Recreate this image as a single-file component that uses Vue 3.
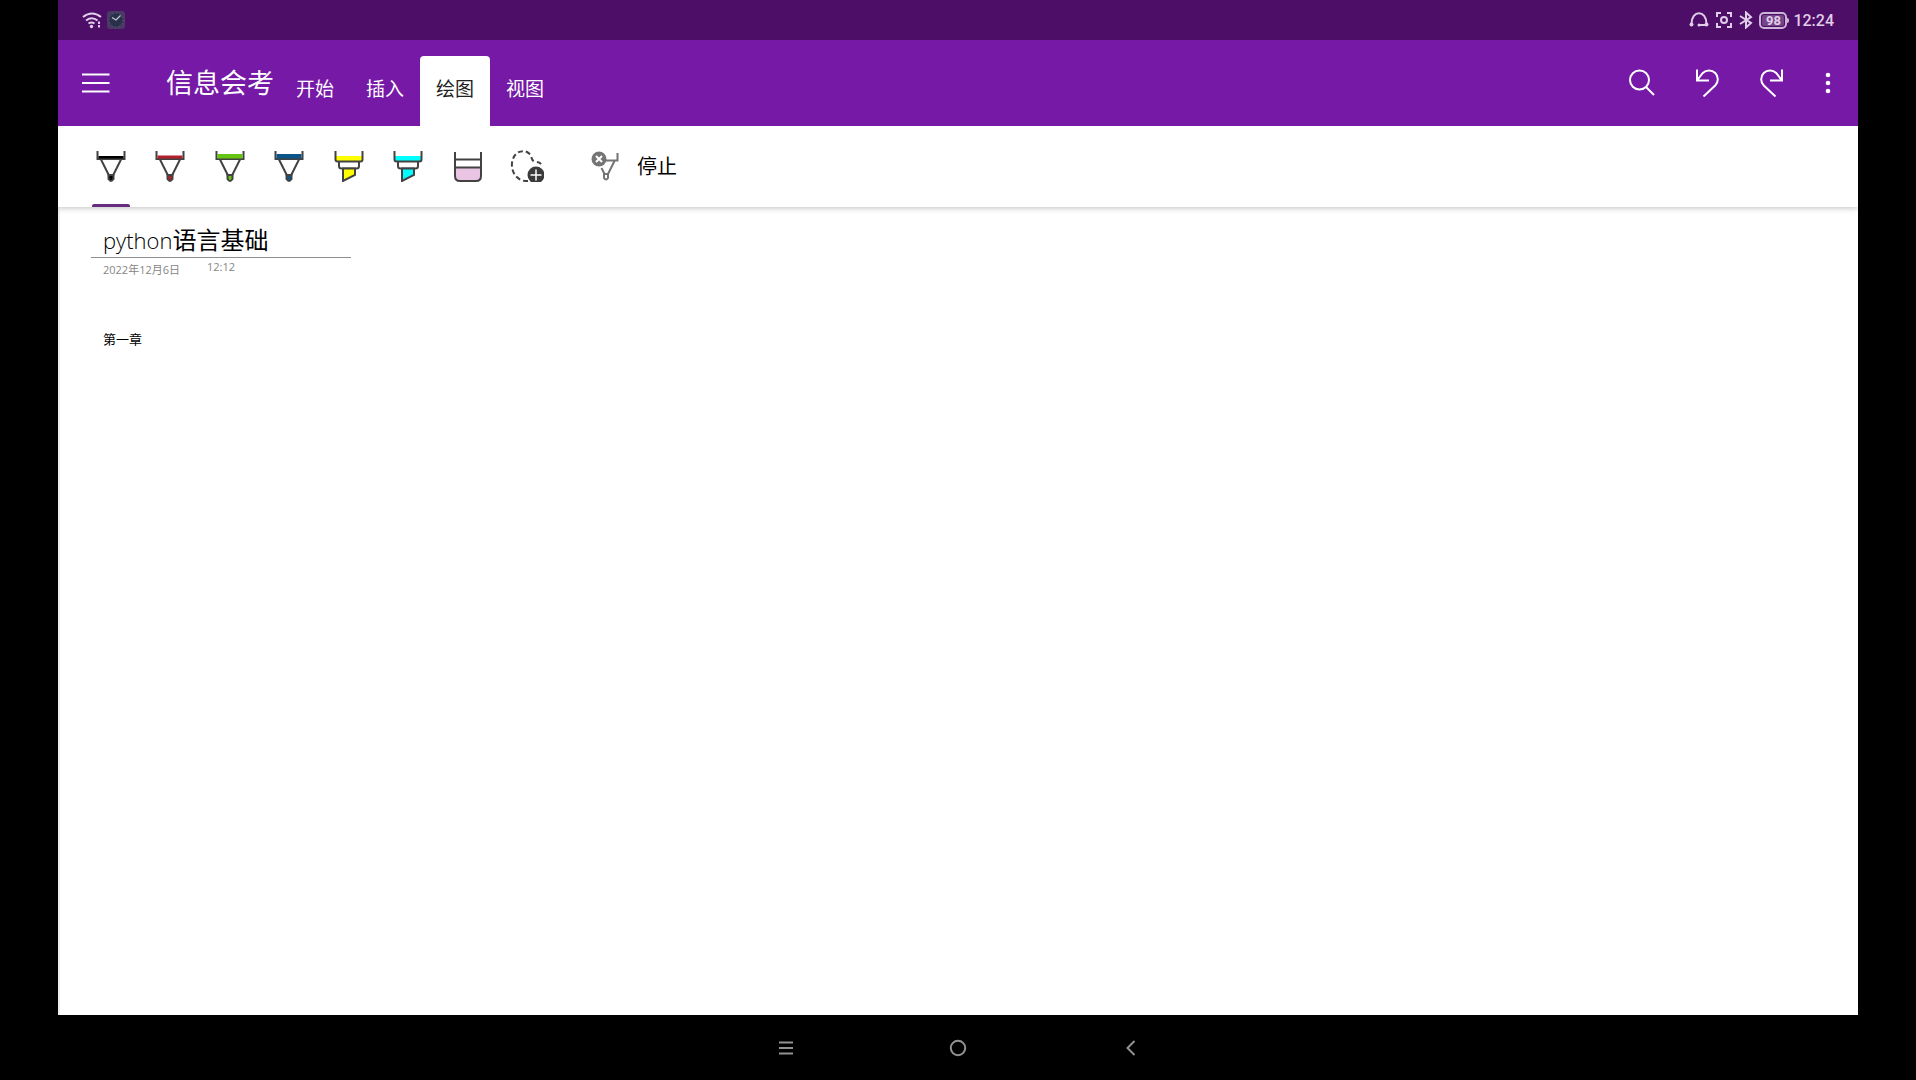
<template>
  <div class="screen">
    <div class="app">
      <div class="status-bar">
        <div class="status-group">
          <svg class="wifi" width="20" height="18" viewBox="0 0 20 18">
            <path d="M1 6Q10-1 19 6M4 9.500Q10 5 15.500 9.500M6.500 12.500Q9.500 10.500 12.500 12.500" />
            <circle cx="9.500" cy="15.500" r="1.700" />
            <path d="M17 10.500v6" stroke-width="3" stroke-dasharray="2.500 1" />
          </svg>
          <svg width="18" height="18" viewBox="0 0 18 18">
            <rect width="18" height="18" rx="3" fill="#4a3a63" />
            <circle cx="9" cy="9" r="7" fill="#29304a" stroke="#6b7189" stroke-dasharray="1 2.660" />
            <path d="M5 6.500l4 2.500 4.500-4.500" fill="none" stroke="#c3cbd3" stroke-width="1.200" />
          </svg>
        </div>
        <div class="status-group status-right">
          <svg width="20" height="18" viewBox="0 0 20 18">
            <path d="M2.500 13C2.500-1.500 17.500-1.500 17.500 13M10 14h7" />
            <circle cx="2.500" cy="13.500" r="2" />
            <circle cx="17.500" cy="13.500" r="2" />
            <circle cx="10" cy="14" r="1.500" />
          </svg>
          <svg width="18" height="18" viewBox="0 0 18 18">
            <path d="M2 6V2h4M12 2h4v4M16 12v4h-4M6 16H2v-4" />
            <circle class="ring" cx="9" cy="9" r="3" />
          </svg>
          <svg width="14" height="18" viewBox="0 0 14 18">
            <path d="M1 5l11 7-5 4.500V1.500L12 6 1 13" />
          </svg>
          <div class="battery"><span>98</span></div>
          <span class="clock">12:24</span>
        </div>
      </div>

      <header class="app-bar">
        <button class="icon-button menu" aria-label="菜单">
          <svg width="28" height="28" viewBox="0 0 28 28">
            <path d="M0 5.500h27.500M0 14h27.500M0 22.500h27.500" />
          </svg>
        </button>
        <h1>信息会考</h1>
        <nav class="tabs">
          <button
            v-for="tab in tabs"
            :key="tab"
            :class="{ active: tab === activeTab }"
            @click="activeTab = tab"
          >
            {{ tab }}
          </button>
        </nav>
        <div class="actions">
          <button class="icon-button" aria-label="搜索">
            <svg width="30" height="30" viewBox="0 0 30 30">
              <circle cx="12.500" cy="12" r="9.500" />
              <path d="M19 19l8 8" />
            </svg>
          </button>
          <button class="icon-button" aria-label="撤消">
            <svg width="30" height="30" viewBox="0 0 30 30">
              <path d="M6 1.500v11h12M6 12.500L11.800 5A8.800 8.800 0 1 1 24.200 17.500L12.500 28.500" />
            </svg>
          </button>
          <button class="icon-button" aria-label="恢复">
            <svg width="30" height="30" viewBox="0 0 30 30">
              <path d="M27 1.500v11H15M27 12.500L21.200 5A8.800 8.800 0 1 0 8.800 17.500L20.500 28.500" />
            </svg>
          </button>
          <button class="icon-button more" aria-label="更多">
            <svg width="6" height="30" viewBox="0 0 6 30">
              <circle cx="3" cy="7" r="2.300" />
              <circle cx="3" cy="15" r="2.300" />
              <circle cx="3" cy="23" r="2.300" />
            </svg>
          </button>
        </div>
      </header>

      <div class="toolbar">
        <div class="tools">
          <button
            v-for="(tool, index) in tools"
            :key="tool.label"
            :class="{ selected: index === activeTool }"
            :aria-label="tool.label"
            @click="activeTool = index"
          >
            <svg v-if="tool.kind === 'pen'" width="32" height="32" viewBox="0 0 32 32">
              <path d="M2.500 1v8h27V1M6 9.500l8 16M26 9.500l-8 16" />
              <rect x="3.500" :y="tool.top" width="25" :height="8.5 - tool.top" :fill="tool.color" stroke="none" />
              <path d="M13.500 25h5v4q-2.500 4-5 0z" :fill="tool.color" />
            </svg>
            <svg v-else-if="tool.kind === 'marker'" width="32" height="32" viewBox="0 0 32 32">
              <rect x="3" y="6" width="26" height="5" :fill="tool.color" stroke="none" />
              <path d="M2.500 1v8.500q0 2 2 2h23q2 0 2-2V1M6 11.500V16q0 2.500 2.500 2.500h15q2.500 0 2.500-2.500v-4.500" />
              <path d="M10 18.500h12V25l-12 6z" :fill="tool.color" />
            </svg>
            <svg v-else-if="tool.kind === 'eraser'" width="32" height="32" viewBox="0 0 32 32">
              <path d="M3 17.500h26V26q0 5-5 5H8q-5 0-5-5z" :fill="tool.color" />
              <path d="M3 2v16M29 2v16M3 9.500h26" />
            </svg>
            <svg v-else width="34" height="32" viewBox="0 0 34 32">
              <path
                d="M18 31C8 32 1 23 2 13 3 4 10-1 17 2c6 3 3 8 8 10 4 0 6 1 7 4"
                stroke-dasharray="5 3"
              />
              <circle cx="26" cy="25" r="8.500" fill="#3b3b3b" stroke="none" />
              <path d="M26 19.500v11M20.500 25h11" stroke="#fff" stroke-width="1.500" />
            </svg>
          </button>
        </div>
        <button class="stop">
          <svg width="30" height="30" viewBox="0 0 30 30">
            <path d="M15 9.500h11.500V2M23.500 10l-7 14M10.500 17l3.500 7" />
            <path d="M13 23h4v4q-2 3-4 0z" />
            <circle cx="8" cy="8" r="7.500" fill="#747474" stroke="none" />
            <path d="M5 5l6 6M11 5l-6 6" stroke="#fff" />
          </svg>
          <span>停止</span>
        </button>
      </div>

      <main class="page">
        <h2><span class="latin">python</span>语言基础</h2>
        <div class="meta">
          <span>2022年12月6日</span>
          <time>12:12</time>
        </div>
        <p>第一章</p>
      </main>
    </div>

    <footer class="system-nav">
      <button aria-label="最近任务">
        <svg width="20" height="20" viewBox="0 0 20 20">
          <path d="M3 4.500h14M3 10h14M3 15.500h14" />
        </svg>
      </button>
      <button aria-label="主屏幕">
        <svg width="20" height="20" viewBox="0 0 20 20"><circle cx="10" cy="10" r="7.200" /></svg>
      </button>
      <button aria-label="返回">
        <svg width="20" height="20" viewBox="0 0 20 20"><path d="M14.500 3l-7 7 7 7" /></svg>
      </button>
    </footer>
  </div>
</template>

<script setup>
import { ref } from 'vue';

const tabs = ['开始', '插入', '绘图', '视图'];
const activeTab = ref('绘图');

// top is where the ink band starts, thicker pens have a taller band
const tools = [
  { kind: 'pen', label: '黑色笔', color: '#000000', top: 6 },
  { kind: 'pen', label: '红色笔', color: '#b3202c', top: 5.5 },
  { kind: 'pen', label: '绿色笔', color: '#66c510', top: 4 },
  { kind: 'pen', label: '蓝色笔', color: '#0b5487', top: 4 },
  { kind: 'marker', label: '黄色荧光笔', color: '#ffff00' },
  { kind: 'marker', label: '青色荧光笔', color: '#00ffff' },
  { kind: 'eraser', label: '橡皮擦', color: '#e9c5e3' },
  { kind: 'lasso', label: '套索' },
];
const activeTool = ref(0);
</script>

<style>
body {
  margin: 0;
  background: #000;
}
</style>

<style scoped>
.screen {
  display: flex;
  flex-direction: column;
  min-height: 100vh;
  box-sizing: border-box;
  padding: 0 58px;
  background: #000;
  font-family: Roboto, 'Noto Sans CJK SC', sans-serif;
}

.app {
  display: flex;
  flex: 1;
  flex-direction: column;
  background: #fff;
}

button {
  padding: 0;
  border: 0;
  background: none;
  color: inherit;
  font: inherit;
  cursor: pointer;
}

svg {
  display: block;
  flex: none;
}

.status-bar {
  display: flex;
  justify-content: space-between;
  align-items: center;
  height: 40px;
  padding: 0 24px;
  background: #4c0e66;
  color: #e0cde8;
}

.status-group {
  display: flex;
  align-items: center;
  gap: 5px;
}

.status-right {
  gap: 6px;
}

.status-right path,
.status-right .ring,
.wifi path {
  fill: none;
  stroke: currentColor;
  stroke-width: 2;
}

.status-right circle:not(.ring),
.wifi circle {
  fill: currentColor;
}

.battery {
  position: relative;
  display: flex;
  box-sizing: border-box;
  width: 28px;
  height: 17px;
  padding: 1px;
  border: 2px solid #cdb5d8;
  border-radius: 5px;
}

.battery::after {
  position: absolute;
  top: 4px;
  right: -4px;
  width: 2px;
  height: 5px;
  border-radius: 0 2px 2px 0;
  background: #cdb5d8;
  content: '';
}

.battery span {
  flex: 1;
  border-radius: 2px;
  background: #754389;
  font-size: 13px;
  font-weight: 700;
  line-height: 11px;
  text-align: center;
}

.clock {
  font-size: 16px;
  font-weight: 500;
}

.app-bar {
  display: flex;
  align-items: stretch;
  height: 86px;
  padding: 0 24px;
  background: #7519a6;
  color: #fff;
}

.icon-button {
  display: flex;
  align-items: center;
}

.icon-button svg {
  fill: none;
  stroke: #fff;
  stroke-width: 2;
}

.more svg {
  fill: #fff;
  stroke: none;
}

h1 {
  margin: 0 6px 0 56px;
  font-size: 27px;
  font-weight: 400;
  line-height: 88px;
}

.tabs {
  display: flex;
  align-items: flex-end;
}

.tabs button {
  height: 70px;
  padding: 0 16px 8px;
  border-radius: 4px 4px 0 0;
  font-size: 19px;
}

.tabs .active {
  background: #fff;
  color: #222;
}

.actions {
  display: flex;
  gap: 34px;
  margin-left: auto;
}

.more {
  padding: 0 3px 0 6px;
}

.toolbar {
  display: flex;
  height: 81px;
  padding-left: 23px;
  background: #fff;
  box-shadow: 0 1px 6px rgba(0, 0, 0, 0.25);
  clip-path: inset(0 0 -10px 0);
}

.tools {
  display: grid;
  grid-template-columns: repeat(8, 1fr);
  width: 476px;
}

.tools button {
  position: relative;
  display: flex;
  justify-content: center;
  align-items: center;
  padding-bottom: 2px;
}

.tools svg {
  fill: none;
  stroke: #424242;
  stroke-width: 2;
}

.tools .selected::after {
  position: absolute;
  bottom: 0;
  width: 38px;
  height: 3px;
  border-radius: 2px 2px 0 0;
  background: #652d7f;
  content: '';
}

.stop {
  display: flex;
  align-items: center;
  gap: 16px;
  margin-left: 34px;
  padding-bottom: 2px;
  color: #000;
  font-size: 20px;
}

.stop svg {
  fill: none;
  stroke: #747474;
  stroke-width: 2;
}

.page {
  flex: 1;
  padding: 16px 33px;
  border-left: 2px solid #eee;
  font-family: 'Open Sans', 'Noto Sans CJK SC', sans-serif;
}

h2 {
  width: 248px;
  margin: 0 0 3px -2px;
  padding-left: 12px;
  border-bottom: 1px solid #8e8e8e;
  color: #000;
  font-size: 24px;
  font-weight: 400;
  line-height: 33px;
}

.latin {
  font-size: 22px;
  font-weight: 300;
}

.meta {
  display: flex;
  gap: 27px;
  padding-left: 10px;
  color: #858585;
  font-size: 11px;
  line-height: 18px;
}

.meta time {
  line-height: 12px;
}

p {
  margin: 50px 0 0;
  padding-left: 10px;
  color: #000;
  font-size: 13px;
  line-height: 20px;
}

.system-nav {
  display: flex;
  justify-content: center;
  align-items: center;
  gap: 152px;
  height: 65px;
}

.system-nav svg {
  fill: none;
  stroke: #929292;
  stroke-width: 2;
}
</style>
